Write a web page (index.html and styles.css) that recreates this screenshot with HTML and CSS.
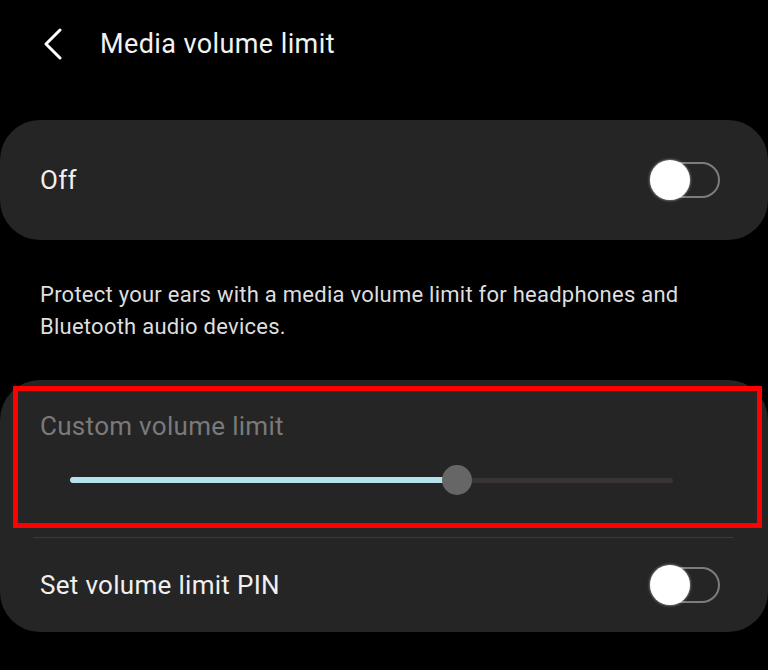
FILE: index.html
```html
<!DOCTYPE html>
<html lang="en">
<head>
    <meta charset="UTF-8">
    <meta name="viewport" content="width=device-width, initial-scale=1.0">
    <title>Media volume limit</title>
    <link rel="stylesheet" href="styles.css">
</head>
<body>
    <div class="header">
        <button class="back-button" aria-label="Back">
            <svg width="22" height="32" viewBox="0 0 22 32">
                <path d="M18 2 L4 16 L18 30" fill="none" stroke="#fff" stroke-width="3" stroke-linecap="round" stroke-linejoin="round"/>
            </svg>
        </button>
        <h1 class="title">Media volume limit</h1>
    </div>

    <div class="card card-main">
        <div class="row">
            <span class="row-label">Off</span>
            <div class="toggle">
                <div class="toggle-track"></div>
                <div class="toggle-thumb"></div>
            </div>
        </div>
    </div>

    <p class="description">Protect your ears with a media volume limit for headphones and Bluetooth audio devices.</p>

    <div class="card card-settings">
        <div class="limit-box">
            <div class="limit-label">Custom volume limit</div>
            <div class="slider">
                <div class="slider-fill" style="width: 64.2%"></div>
                <div class="slider-thumb"></div>
                <div class="slider-rest"></div>
            </div>
        </div>
        <div class="divider"></div>
        <div class="row row-pin">
            <span class="row-label">Set volume limit PIN</span>
            <div class="toggle">
                <div class="toggle-track"></div>
                <div class="toggle-thumb"></div>
            </div>
        </div>
    </div>
</body>
</html>
```

FILE: styles.css
```css
body {
    font-family: Roboto, "Noto Sans", sans-serif;
    background-color: #000;
    color: #fff;
    margin: 0;
    padding: 0;
    width: 768px;
    height: 670px;
    overflow: hidden;
}
.header {
    display: flex;
    align-items: center;
    height: 88px;
    padding-left: 42px;
}
.back-button {
    background: none;
    border: none;
    padding: 0;
    width: 24px;
    height: 32px;
    display: flex;
    align-items: center;
    margin-right: 34px;
}
.title {
    margin: 0;
    font-size: 27px;
    letter-spacing: 0.4px;
    font-weight: 400;
    color: #f2f2f2;
}
.card {
    background-color: #252525;
    border-radius: 40px;
}
.card-main {
    margin-top: 32px;
    height: 120px;
    display: flex;
}
.row {
    flex: 1;
    display: flex;
    align-items: center;
    justify-content: space-between;
    padding: 0 48px 0 40px;
}
.row-label {
    font-size: 26px;
    letter-spacing: 0.3px;
    color: #f0f0f0;
}
.toggle {
    position: relative;
    width: 70px;
    height: 40px;
}
.toggle-track {
    position: absolute;
    left: 12px;
    right: 0;
    top: 2px;
    bottom: 2px;
    border: 2px solid #7c7c7c;
    border-radius: 20px;
    box-sizing: border-box;
}
.toggle-thumb {
    position: absolute;
    left: 0;
    top: 0;
    width: 40px;
    height: 40px;
    border-radius: 50%;
    background-color: #fff;
    box-shadow: 0 0 3px rgba(255, 255, 255, 0.7);
}
.description {
    margin: 39px 40px 0 40px;
    font-size: 22px;
    letter-spacing: 0.25px;
    line-height: 32px;
    color: #dedede;
}
.card-settings {
    margin-top: 37px;
    padding-top: 6px;
    height: 246px;
}
.limit-box {
    margin: 0 6px 0 13px;
    border: 5px solid #ff0000;
    padding: 20px 84px 28px 22px;
}
.limit-label {
    font-size: 26px;
    letter-spacing: 0.3px;
    line-height: 30px;
    color: #7a7a7a;
}
.slider {
    display: flex;
    align-items: center;
    height: 30px;
    margin: 24px 0 0 30px;
}
.slider-fill {
    height: 6px;
    background-color: #b6e2ec;
    border-radius: 3px 0 0 3px;
    margin-right: -15px;
}
.slider-thumb {
    width: 30px;
    height: 30px;
    border-radius: 50%;
    background-color: #666666;
    flex-shrink: 0;
    z-index: 1;
}
.slider-rest {
    flex: 1;
    height: 5px;
    background-color: #3a3335;
    border-radius: 0 3px 3px 0;
    margin-left: -15px;
}
.divider {
    height: 1px;
    background-color: #3a3a3a;
    margin: 9px 35px 0 33px;
}
.row-pin {
    height: 94px;
}
```
